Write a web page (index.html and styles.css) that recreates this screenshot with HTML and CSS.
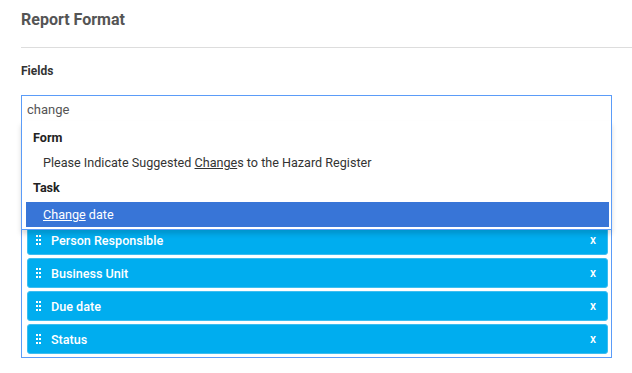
FILE: index.html
```html
<!DOCTYPE html>
<html>
<head>
<meta charset="utf-8">
<link rel="stylesheet" href="styles.css">
</head>
<body>
<div class="page">
  <h2 class="title">Report Format</h2>
  <div class="rule"></div>
  <div class="label">Fields</div>
  <div class="picker">
    <div class="search">change</div>
    <ul class="choices">
      <li class="choice"><svg class="grip" width="5" height="10" viewBox="0 0 5 10"><rect x="0" y="0" width="2" height="2"/><rect x="3" y="0" width="2" height="2"/><rect x="0" y="4" width="2" height="2"/><rect x="3" y="4" width="2" height="2"/><rect x="0" y="8" width="2" height="2"/><rect x="3" y="8" width="2" height="2"/></svg><span class="name">Person Responsible</span><span class="remove">x</span></li>
      <li class="choice"><svg class="grip" width="5" height="10" viewBox="0 0 5 10"><rect x="0" y="0" width="2" height="2"/><rect x="3" y="0" width="2" height="2"/><rect x="0" y="4" width="2" height="2"/><rect x="3" y="4" width="2" height="2"/><rect x="0" y="8" width="2" height="2"/><rect x="3" y="8" width="2" height="2"/></svg><span class="name">Business Unit</span><span class="remove">x</span></li>
      <li class="choice"><svg class="grip" width="5" height="10" viewBox="0 0 5 10"><rect x="0" y="0" width="2" height="2"/><rect x="3" y="0" width="2" height="2"/><rect x="0" y="4" width="2" height="2"/><rect x="3" y="4" width="2" height="2"/><rect x="0" y="8" width="2" height="2"/><rect x="3" y="8" width="2" height="2"/></svg><span class="name">Due date</span><span class="remove">x</span></li>
      <li class="choice"><svg class="grip" width="5" height="10" viewBox="0 0 5 10"><rect x="0" y="0" width="2" height="2"/><rect x="3" y="0" width="2" height="2"/><rect x="0" y="4" width="2" height="2"/><rect x="3" y="4" width="2" height="2"/><rect x="0" y="8" width="2" height="2"/><rect x="3" y="8" width="2" height="2"/></svg><span class="name">Status</span><span class="remove">x</span></li>
    </ul>
    <div class="dropdown">
      <ul class="results">
        <li class="group">
          <div class="group-label">Form</div>
          <ul class="options">
            <li class="option">Please Indicate Suggested <u>Change</u>s to the Hazard Register</li>
          </ul>
        </li>
        <li class="group">
          <div class="group-label">Task</div>
          <ul class="options second">
            <li class="option active"><u>Change</u> date</li>
          </ul>
        </li>
      </ul>
    </div>
  </div>
</div>
</body>
</html>
```

FILE: styles.css
```css
* { box-sizing: border-box; }
html, body { margin: 0; padding: 0; background: #fff; }
body { font-family: Roboto, "Liberation Sans", Arial, sans-serif; color: #333; }
ul { list-style: none; margin: 0; padding: 0; }

.page { padding: 10px 0 0 21px; }

.title {
  margin: 0;
  font-size: 16px;
  line-height: 20px;
  font-weight: 700;
  color: #555;
}

.rule {
  margin-top: 17px;
  border-top: 1px solid #ddd;
}

.label {
  margin-top: 15px;
  font-size: 12px;
  line-height: 16px;
  font-weight: 700;
  color: #333;
}

.picker {
  position: relative;
  margin-top: 16px;
  width: 591px;
  border: 1px solid #5b9cf8;
  background: #fff;
}

.search {
  padding: 2px 5px 0;
  height: 26px;
  font-size: 13px;
  line-height: 24px;
  color: #555;
}

.choices {
  margin-top: 103px;
  padding: 0 3px 3px 5px;
  display: flex;
  flex-direction: column;
  gap: 3px;
}

.choice {
  height: 30px;
  display: flex;
  align-items: center;
  padding: 0 11px 0 8px;
  background: #00adef;
  border: 1px solid #3dbdf0;
  border-radius: 3px;
  color: #fff;
  font-family: "Roboto Medium", Roboto, "Liberation Sans", Arial, sans-serif;
  font-size: 12.6px;
  font-weight: 500;
}

.grip { fill: #fff; flex: none; }
.name { margin-left: 10px; flex: 1; }
.remove { font-size: 12px; font-weight: 700; }

.dropdown {
  position: absolute;
  top: 25px;
  left: -1px;
  right: -1px;
  background: #fff;
  border: 1px solid #5b9cf8;
  border-top: 0;
  box-shadow: 0 4px 5px rgba(0, 0, 0, 0.15);
}

.results {
  margin: 4px 2px 2px 0;
  padding-left: 4px;
  font-size: 12.6px;
}

.group-label {
  height: 25px;
  line-height: 25px;
  padding-left: 7px;
  font-weight: 700;
  color: #222;
}

.option {
  height: 25px;
  line-height: 25px;
  padding-left: 17px;
  color: #333;
}

.options.second { padding-top: 2px; }

.option.active {
  background: #3875d7;
  color: #fff;
}
```
